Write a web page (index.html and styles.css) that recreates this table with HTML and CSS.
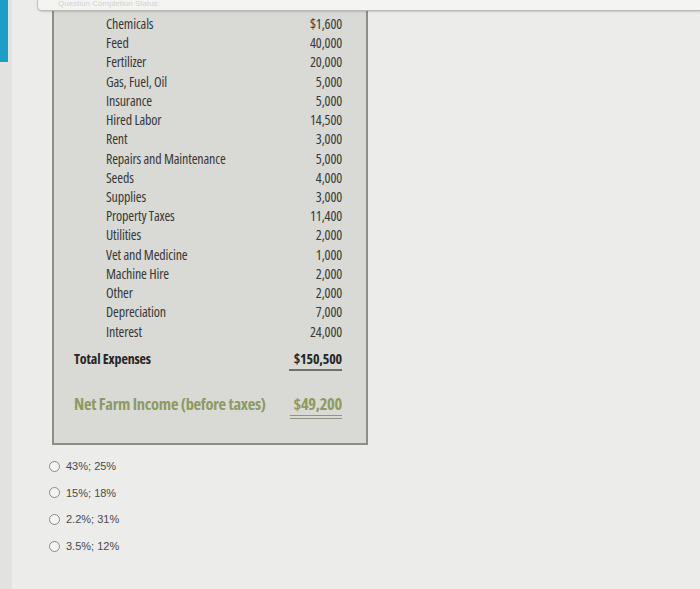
FILE: index.html
```html
<!DOCTYPE html>
<html>
<head>
<meta charset="utf-8">
<link rel="stylesheet" href="styles.css">
</head>
<body>
<div class="page">
  <div class="side"><div class="side-blue"></div></div>
  <div class="main">
    <div class="topbar"><span class="topbar-text">Question Completion Status:</span></div>
    <div class="sheet">
      <div class="items">
        <div class="row"><span>Chemicals</span><span>$1,600</span></div>
        <div class="row"><span>Feed</span><span>40,000</span></div>
        <div class="row"><span>Fertilizer</span><span>20,000</span></div>
        <div class="row"><span>Gas, Fuel, Oil</span><span>5,000</span></div>
        <div class="row"><span>Insurance</span><span>5,000</span></div>
        <div class="row"><span>Hired Labor</span><span>14,500</span></div>
        <div class="row"><span>Rent</span><span>3,000</span></div>
        <div class="row"><span>Repairs and Maintenance</span><span>5,000</span></div>
        <div class="row"><span>Seeds</span><span>4,000</span></div>
        <div class="row"><span>Supplies</span><span>3,000</span></div>
        <div class="row"><span>Property Taxes</span><span>11,400</span></div>
        <div class="row"><span>Utilities</span><span>2,000</span></div>
        <div class="row"><span>Vet and Medicine</span><span>1,000</span></div>
        <div class="row"><span>Machine Hire</span><span>2,000</span></div>
        <div class="row"><span>Other</span><span>2,000</span></div>
        <div class="row"><span>Depreciation</span><span>7,000</span></div>
        <div class="row"><span>Interest</span><span>24,000</span></div>
      </div>
      <div class="total"><span>Total Expenses</span><span class="total-val">$150,500</span></div>
      <div class="net"><span>Net Farm Income (before taxes)</span><span class="net-val">$49,200</span></div>
    </div>
    <div class="options">
      <label class="opt"><span class="radio"></span>43%; 25%</label>
      <label class="opt"><span class="radio"></span>15%; 18%</label>
      <label class="opt"><span class="radio"></span>2.2%; 31%</label>
      <label class="opt"><span class="radio"></span>3.5%; 12%</label>
    </div>
  </div>
</div>
</body>
</html>
```
FILE: styles.css
```css
html, body {
  margin: 0;
  padding: 0;
  background: #ececea;
}
.page {
  display: flex;
  width: 700px;
  height: 589px;
  overflow: hidden;
}
.side {
  width: 12px;
  flex: none;
  background: #e2e2e0;
}
.side-blue {
  width: 8px;
  height: 62px;
  background: #1d9ec7;
}
.main {
  flex: 1;
  display: flex;
  flex-direction: column;
}
.topbar {
  margin-left: 25px;
  height: 10px;
  background: #f4f4f2;
  border-bottom: 1px solid #b9b9b6;
  border-left: 1px solid #c4c4c1;
  border-bottom-left-radius: 5px;
  box-shadow: 0 1px 2px rgba(0,0,0,0.15);
  overflow: hidden;
  position: relative;
  z-index: 1;
}
.topbar-text {
  display: block;
  margin-top: -1px;
  margin-left: 20px;
  font-family: "Liberation Sans", Arial, sans-serif;
  font-size: 8px;
  line-height: 9px;
  color: #d2d2d0;
}
.sheet {
  margin-left: 40px;
  width: 316px;
  background: #d9d9d5;
  border: 2px solid #8e8e89;
  border-top: none;
  padding: 3px 24px 0 20px;
  height: 434px;
  box-sizing: border-box;
  font-family: "Open Sans", sans-serif;
  font-stretch: 75%;
  color: #383838;
}
.items {
  padding-left: 32px;
}
.row {
  display: flex;
  justify-content: space-between;
  height: 19.22px;
  line-height: 19.22px;
  font-size: 14px;
  letter-spacing: -0.15px;
}
.total {
  display: flex;
  justify-content: space-between;
  margin-top: 8px;
  font-size: 14px;
  font-weight: bold;
  color: #262626;
  letter-spacing: -0.15px;
  line-height: 20px;
}
.total-val {
  border-bottom: 2px solid #707070;
  padding: 0 0 0 5px;
}
.net {
  display: flex;
  justify-content: space-between;
  margin-top: 21px;
  font-size: 16.5px;
  font-weight: bold;
  color: #8e9a62;
  letter-spacing: -0.3px;
  line-height: 23px;
}
.net-val {
  border-bottom: 4px double #8f9585;
  padding: 0 0 0 3px;
}
.options {
  display: flex;
  flex-direction: column;
  gap: 10.7px;
  margin-top: 13px;
  padding-left: 37px;
}
.opt {
  display: flex;
  align-items: center;
  gap: 6px;
  height: 16px;
  font-family: "Liberation Sans", Arial, sans-serif;
  font-size: 11px;
  color: #4a4a4a;
}
.radio {
  width: 11px;
  height: 11px;
  border: 1px solid #8a8a8a;
  border-radius: 50%;
  background: #f4f4f4;
  box-sizing: border-box;
}
```
